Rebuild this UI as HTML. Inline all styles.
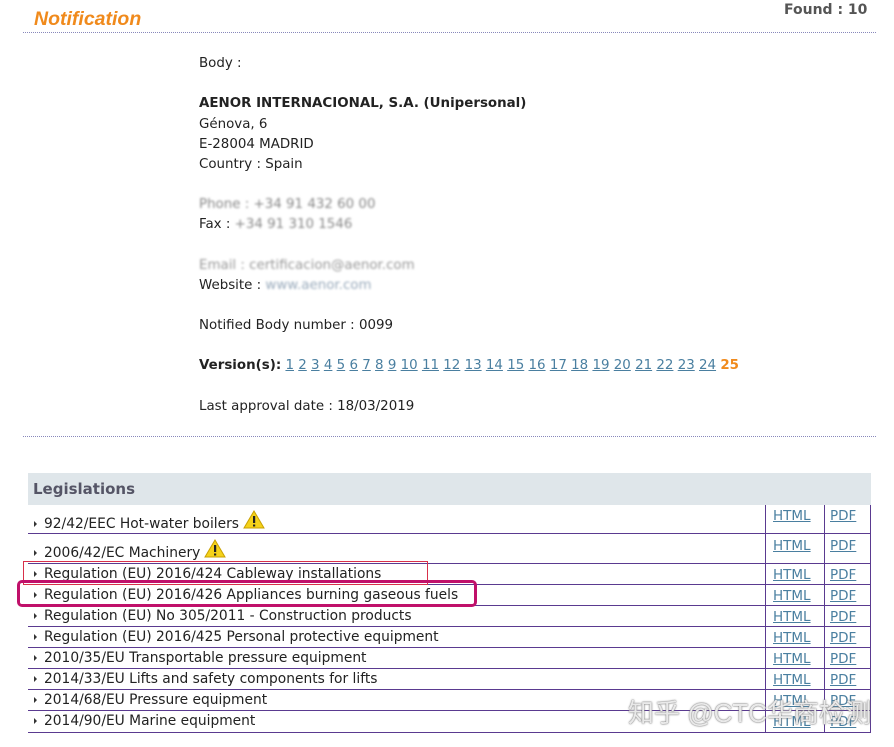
<!DOCTYPE html>
<html><head><meta charset="utf-8"><style>
body{margin:0;width:894px;height:747px;background:#fff;position:relative;overflow:hidden;font-family:"DejaVu Sans","Liberation Sans",sans-serif;font-size:13.4px;color:#222}
.a{position:absolute;white-space:nowrap}
.lk{color:#4a7fa0;text-decoration:underline}
.dot{position:absolute;left:23px;width:853px;height:0;border-top:1px dotted #8888bb}
.hl{position:absolute;left:28px;width:843px;height:0;border-top:1px solid #5a3a90}
.vl{position:absolute;top:505px;height:227px;width:0;border-left:1px solid #5a3a90}
.row{position:absolute;left:34px;font-size:13.8px;color:#222;white-space:nowrap}
.tri{display:inline-block;width:0;height:0;border-left:3px solid #333;border-top:3px solid transparent;border-bottom:3px solid transparent;margin-right:7px;vertical-align:1px}
.h{position:absolute;left:773px;font-size:13.5px}
.p{position:absolute;left:830px;font-size:13.5px}
.warn{display:inline-block;vertical-align:-1px;margin-left:4px}
</style></head><body>
<div class="a" style="left:34px;top:8px;font-size:19.5px;font-weight:bold;font-style:italic;color:#f08a1c;font-family:'Liberation Sans',sans-serif">Notification</div>
<div class="a" style="left:784px;top:2px;font-size:14px;font-weight:bold;color:#555">Found : 10</div>
<div class="dot" style="top:32px"></div>
<div class="a" style="left:199px;top:56px">Body :</div>
<div class="a" style="left:199px;top:96px;font-weight:bold">AENOR INTERNACIONAL, S.A. (Unipersonal)</div>
<div class="a" style="left:199px;top:117px">Génova, 6</div>
<div class="a" style="left:199px;top:137px">E-28004 MADRID</div>
<div class="a" style="left:199px;top:157px">Country : Spain</div>
<div class="a" style="left:199px;top:197px;color:#888;filter:blur(1px)">Phone : +34 91 432 60 00</div>
<div class="a" style="left:199px;top:217px">Fax : <span style="color:#888;filter:blur(1px);display:inline-block">+34 91 310 1546</span></div>
<div class="a" style="left:199px;top:258px;color:#999;filter:blur(1px)">Email : certificacion@aenor.com</div>
<div class="a" style="left:199px;top:278px">Website : <span style="color:#9ab;filter:blur(1px);display:inline-block">www.aenor.com</span></div>
<div class="a" style="left:199px;top:318px">Notified Body number : 0099</div>
<div class="a" style="left:199px;top:358px"><b>Version(s):</b> <span class="lk">1</span> <span class="lk">2</span> <span class="lk">3</span> <span class="lk">4</span> <span class="lk">5</span> <span class="lk">6</span> <span class="lk">7</span> <span class="lk">8</span> <span class="lk">9</span> <span class="lk">10</span> <span class="lk">11</span> <span class="lk">12</span> <span class="lk">13</span> <span class="lk">14</span> <span class="lk">15</span> <span class="lk">16</span> <span class="lk">17</span> <span class="lk">18</span> <span class="lk">19</span> <span class="lk">20</span> <span class="lk">21</span> <span class="lk">22</span> <span class="lk">23</span> <span class="lk">24</span> <b style="color:#f08a1c">25</b></div>
<div class="a" style="left:199px;top:399px">Last approval date : 18/03/2019</div>
<div class="dot" style="top:436px"></div>

<div style="position:absolute;left:28px;top:473px;width:843px;height:32px;background:#dfe6ea"></div>
<div class="a" style="left:33px;top:480px;font-size:15px;font-weight:bold;color:#556">Legislations</div>

<div class="hl" style="top:533px"></div><div class="hl" style="top:563px"></div><div class="hl" style="top:584px"></div><div class="hl" style="top:605px"></div><div class="hl" style="top:626px"></div><div class="hl" style="top:647px"></div><div class="hl" style="top:668px"></div><div class="hl" style="top:689px"></div><div class="hl" style="top:710px"></div><div class="hl" style="top:732px"></div>
<div class="vl" style="left:765px"></div><div class="vl" style="left:824px"></div><div class="vl" style="left:870px"></div>

<div class="row" style="top:510px"><span class="tri"></span>92/42/EEC Hot-water boilers<svg class="warn" width="22" height="19" viewBox="0 0 22 19"><path d="M11 1 L21 18 L1 18 Z" fill="#f5d21a" stroke="#c9a000"/><rect x="10" y="6" width="2.2" height="7" fill="#222"/><rect x="10" y="14.5" width="2.2" height="2" fill="#222"/></svg></div>
<div class="row" style="top:539px"><span class="tri"></span>2006/42/EC Machinery<svg class="warn" width="22" height="19" viewBox="0 0 22 19"><path d="M11 1 L21 18 L1 18 Z" fill="#f5d21a" stroke="#c9a000"/><rect x="10" y="6" width="2.2" height="7" fill="#222"/><rect x="10" y="14.5" width="2.2" height="2" fill="#222"/></svg></div>
<div class="row" style="top:566px"><span class="tri"></span>Regulation (EU) 2016/424 Cableway installations</div>
<div class="row" style="top:587px"><span class="tri"></span>Regulation (EU) 2016/426 Appliances burning gaseous fuels</div>
<div class="row" style="top:608px"><span class="tri"></span>Regulation (EU) No 305/2011 - Construction products</div>
<div class="row" style="top:629px"><span class="tri"></span>Regulation (EU) 2016/425 Personal protective equipment</div>
<div class="row" style="top:650px"><span class="tri"></span>2010/35/EU Transportable pressure equipment</div>
<div class="row" style="top:671px"><span class="tri"></span>2014/33/EU Lifts and safety components for lifts</div>
<div class="row" style="top:692px"><span class="tri"></span>2014/68/EU Pressure equipment</div>
<div class="row" style="top:713px"><span class="tri"></span>2014/90/EU Marine equipment</div>

<div class="h lk" style="top:508px">HTML</div><div class="p lk" style="top:508px">PDF</div>
<div class="h lk" style="top:538px">HTML</div><div class="p lk" style="top:538px">PDF</div>
<div class="h lk" style="top:567px">HTML</div><div class="p lk" style="top:567px">PDF</div>
<div class="h lk" style="top:588px">HTML</div><div class="p lk" style="top:588px">PDF</div>
<div class="h lk" style="top:609px">HTML</div><div class="p lk" style="top:609px">PDF</div>
<div class="h lk" style="top:630px">HTML</div><div class="p lk" style="top:630px">PDF</div>
<div class="h lk" style="top:651px">HTML</div><div class="p lk" style="top:651px">PDF</div>
<div class="h lk" style="top:672px">HTML</div><div class="p lk" style="top:672px">PDF</div>
<div class="h lk" style="top:693px">HTML</div><div class="p lk" style="top:693px">PDF</div>
<div class="h lk" style="top:714px">HTML</div><div class="p lk" style="top:714px">PDF</div>

<div style="position:absolute;left:23px;top:561px;width:403px;height:22px;border:1px solid #d8304a"></div>
<div style="position:absolute;left:17px;top:580px;width:454px;height:21px;border:3px solid #c0106a;border-radius:5px"></div>

<div class="a" style="left:628px;top:693px;font-size:26px;color:rgba(255,255,255,0.85);font-family:'Liberation Sans','Noto Sans CJK SC',sans-serif;text-shadow:0 0 1px #666,0 0 2px #888">知乎 @CTC华商检测</div>
</body></html>
